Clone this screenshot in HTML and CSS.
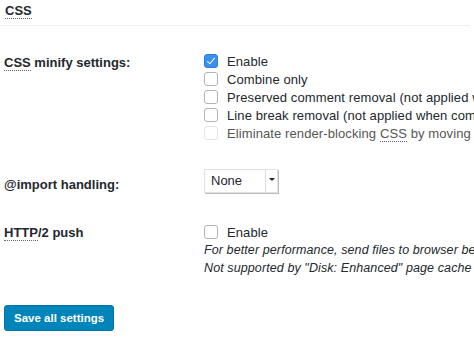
FILE: index.html
```html
<!DOCTYPE html>
<html lang="en">
<head>
  <meta charset="UTF-8">
  <title>Minify Settings</title>
  <link rel="stylesheet" href="styles.css">
</head>
<body>

  <!-- Section header -->
  <h3 class="section-title"><abbr>CSS</abbr></h3>

  <div class="form-table">

    <div class="row row-minify">
      <div class="label"><abbr>CSS</abbr> minify settings:</div>
      <div class="field">
        <label class="check"><span class="box checked"></span><span>Enable</span></label>
        <label class="check"><span class="box"></span><span>Combine only</span></label>
        <label class="check"><span class="box"></span><span>Preserved comment removal (not applied when combine only is active)</span></label>
        <label class="check"><span class="box"></span><span>Line break removal (not applied when combine only is active)</span></label>
        <label class="check disabled"><span class="box"></span><span>Eliminate render-blocking <abbr>CSS</abbr> by moving it to HTTP body</span></label>
      </div>
    </div>

    <div class="row row-import">
      <div class="label">@import handling:</div>
      <div class="field">
        <div class="select">
          <span class="select-value">None</span>
          <span class="select-arrow"></span>
        </div>
      </div>
    </div>

    <div class="row row-push">
      <div class="label"><abbr>HTTP</abbr>/2 push</div>
      <div class="field">
        <label class="check"><span class="box"></span><span>Enable</span></label>
        <p class="description">For better performance, send files to browser before they are requested by the browser.</p>
        <p class="description">Not supported by "Disk: Enhanced" page cache engine</p>
      </div>
    </div>

  </div>

  <button class="button-primary">Save all settings</button>

</body>
</html>
```

FILE: styles.css
```css
body {
  margin: 0;
  padding: 0 4px;
  font-family: "Liberation Sans", Arial, sans-serif;
  font-size: 13px;
  color: #23282d;
  background-color: #fff;
  white-space: nowrap;
  overflow: hidden;
}

abbr {
  text-decoration: none;
  border-bottom: 1px dotted #666;
}

.section-title {
  margin: 0 0 0 -4px;
  padding: 3px 1px 0 5px;
  height: 22px;
  font-size: 13px;
  font-weight: bold;
  border-bottom: 1px solid #eee;
}

.form-table {
  margin-top: 26px;
}

.row {
  display: flex;
}

.label {
  width: 200px;
  flex-shrink: 0;
  font-weight: bold;
  font-size: 13px;
  padding-top: 3px;
}

.field {
  display: flex;
  flex-direction: column;
}

.check {
  display: flex;
  align-items: center;
  height: 18px;
  font-size: 13px;
  letter-spacing: 0.1px;
}

.box {
  width: 12px;
  height: 12px;
  margin-right: 9px;
  border: 1px solid #b4b4b4;
  border-radius: 3px;
  background: #fff;
  box-sizing: content-box;
  flex-shrink: 0;
}

.box.checked {
  background: #3b8ff0;
  border-color: #2b7fe0;
  position: relative;
}

.box.checked::after {
  content: "";
  position: absolute;
  left: 4px;
  top: 1px;
  width: 3px;
  height: 7px;
  border: solid #fff;
  border-width: 0 1.5px 1.5px 0;
  transform: rotate(40deg);
}

.check.disabled {
  color: #555;
}

.check.disabled .box {
  border-color: #e4e4e4;
}

.row-import {
  margin-top: 27px;
}

.row-import .label {
  padding-top: 8px;
}

.select {
  display: flex;
  width: 72px;
  height: 22px;
  border: 1px solid #e2e2e2;
  box-shadow: 1px 1px 0 #bbb;
  background: #fff;
}

.select-value {
  flex: 1;
  padding-left: 6px;
  line-height: 22px;
  font-size: 13px;
}

.select-arrow {
  width: 11px;
  border-left: 1px solid #ddd;
  position: relative;
}

.select-arrow::after {
  content: "";
  position: absolute;
  left: 3px;
  top: 8px;
  border-left: 3px solid transparent;
  border-right: 3px solid transparent;
  border-top: 3px solid #222;
}

.row-push {
  margin-top: 30px;
}

.row-push .label {
  padding-top: 2px;
}

.description {
  margin: 1px 0 0;
  font-style: italic;
  font-size: 12.5px;
  line-height: 17px;
  letter-spacing: 0.1px;
}

.button-primary {
  margin-top: 28px;
  height: 26px;
  padding: 0 9px;
  background-color: #0085ba;
  border: 1px solid #0073aa;
  border-radius: 3px;
  color: white;
  font-family: "Liberation Sans", Arial, sans-serif;
  font-size: 11.5px;
  font-weight: bold;
  cursor: pointer;
}
```
